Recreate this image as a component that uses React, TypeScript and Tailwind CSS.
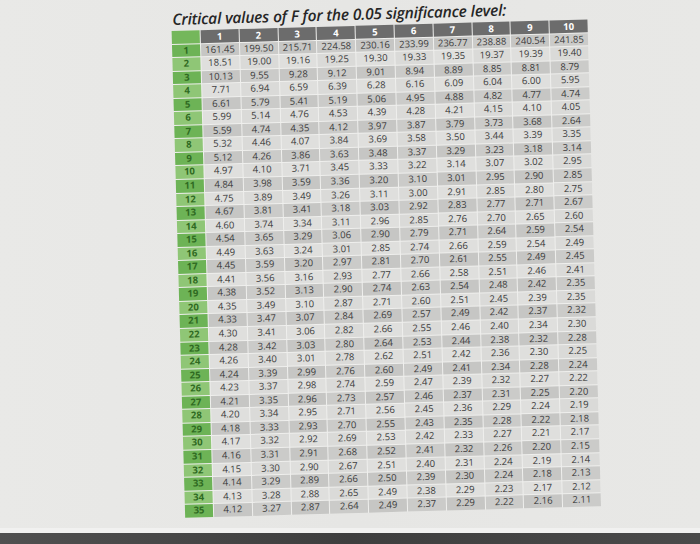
import React from "react"

const rows: string[][] = [
  ["161.45", "199.50", "215.71", "224.58", "230.16", "233.99", "236.77", "238.88", "240.54", "241.85"],
  ["18.51", "19.00", "19.16", "19.25", "19.30", "19.33", "19.35", "19.37", "19.39", "19.40"],
  ["10.13", "9.55", "9.28", "9.12", "9.01", "8.94", "8.89", "8.85", "8.81", "8.79"],
  ["7.71", "6.94", "6.59", "6.39", "6.28", "6.16", "6.09", "6.04", "6.00", "5.95"],
  ["6.61", "5.79", "5.41", "5.19", "5.06", "4.95", "4.88", "4.82", "4.77", "4.74"],
  ["5.99", "5.14", "4.76", "4.53", "4.39", "4.28", "4.21", "4.15", "4.10", "4.05"],
  ["5.59", "4.74", "4.35", "4.12", "3.97", "3.87", "3.79", "3.73", "3.68", "2.64"],
  ["5.32", "4.46", "4.07", "3.84", "3.69", "3.58", "3.50", "3.44", "3.39", "3.35"],
  ["5.12", "4.26", "3.86", "3.63", "3.48", "3.37", "3.29", "3.23", "3.18", "3.14"],
  ["4.97", "4.10", "3.71", "3.45", "3.33", "3.22", "3.14", "3.07", "3.02", "2.95"],
  ["4.84", "3.98", "3.59", "3.36", "3.20", "3.10", "3.01", "2.95", "2.90", "2.85"],
  ["4.75", "3.89", "3.49", "3.26", "3.11", "3.00", "2.91", "2.85", "2.80", "2.75"],
  ["4.67", "3.81", "3.41", "3.18", "3.03", "2.92", "2.83", "2.77", "2.71", "2.67"],
  ["4.60", "3.74", "3.34", "3.11", "2.96", "2.85", "2.76", "2.70", "2.65", "2.60"],
  ["4.54", "3.65", "3.29", "3.06", "2.90", "2.79", "2.71", "2.64", "2.59", "2.54"],
  ["4.49", "3.63", "3.24", "3.01", "2.85", "2.74", "2.66", "2.59", "2.54", "2.49"],
  ["4.45", "3.59", "3.20", "2.97", "2.81", "2.70", "2.61", "2.55", "2.49", "2.45"],
  ["4.41", "3.56", "3.16", "2.93", "2.77", "2.66", "2.58", "2.51", "2.46", "2.41"],
  ["4.38", "3.52", "3.13", "2.90", "2.74", "2.63", "2.54", "2.48", "2.42", "2.35"],
  ["4.35", "3.49", "3.10", "2.87", "2.71", "2.60", "2.51", "2.45", "2.39", "2.35"],
  ["4.33", "3.47", "3.07", "2.84", "2.69", "2.57", "2.49", "2.42", "2.37", "2.32"],
  ["4.30", "3.41", "3.06", "2.82", "2.66", "2.55", "2.46", "2.40", "2.34", "2.30"],
  ["4.28", "3.42", "3.03", "2.80", "2.64", "2.53", "2.44", "2.38", "2.32", "2.28"],
  ["4.26", "3.40", "3.01", "2.78", "2.62", "2.51", "2.42", "2.36", "2.30", "2.25"],
  ["4.24", "3.39", "2.99", "2.76", "2.60", "2.49", "2.41", "2.34", "2.28", "2.24"],
  ["4.23", "3.37", "2.98", "2.74", "2.59", "2.47", "2.39", "2.32", "2.27", "2.22"],
  ["4.21", "3.35", "2.96", "2.73", "2.57", "2.46", "2.37", "2.31", "2.25", "2.20"],
  ["4.20", "3.34", "2.95", "2.71", "2.56", "2.45", "2.36", "2.29", "2.24", "2.19"],
  ["4.18", "3.33", "2.93", "2.70", "2.55", "2.43", "2.35", "2.28", "2.22", "2.18"],
  ["4.17", "3.32", "2.92", "2.69", "2.53", "2.42", "2.33", "2.27", "2.21", "2.17"],
  ["4.16", "3.31", "2.91", "2.68", "2.52", "2.41", "2.32", "2.26", "2.20", "2.15"],
  ["4.15", "3.30", "2.90", "2.67", "2.51", "2.40", "2.31", "2.24", "2.19", "2.14"],
  ["4.14", "3.29", "2.89", "2.66", "2.50", "2.39", "2.30", "2.24", "2.18", "2.13"],
  ["4.13", "3.28", "2.88", "2.65", "2.49", "2.38", "2.29", "2.23", "2.17", "2.12"],
  ["4.12", "3.27", "2.87", "2.64", "2.49", "2.37", "2.29", "2.22", "2.16", "2.11"],
]

const cols = ["1", "2", "3", "4", "5", "6", "7", "8", "9", "10"]

const title = "Critical values of F for the 0.05 significance level:".split(" ")

export default function App() {
  return (
    <div className="w-[700px] h-[544px] overflow-hidden flex flex-col bg-gradient-to-r from-[#e9e9e7] via-[#e6e6e4] to-[#e8e8e6] font-['Open_Sans',sans-serif]">
      <div className="flex-1 pl-[171px] pt-[10px]">
        <div className="w-[416px] origin-top-left rotate-[-1.6deg]">
          <h1 className="flex gap-[4px] text-[15.5px] leading-[18px] font-semibold italic tracking-[-0.2px] text-[#262626] whitespace-nowrap pl-[1px] mb-[3px]">
            {title.map((w, i) => (
              <span key={i}>{w}</span>
            ))}
          </h1>

          {/* table */}
          <div className="grid grid-cols-[28px_repeat(10,1fr)] gap-px bg-[#efefed] text-[9.5px] leading-[12.55px] text-center">
            <div className="bg-[#74b75b]" />
            {cols.map((c) => (
              <div key={c} className="bg-[#6c6c6c] flex justify-center pt-[1px]">
                <span className="text-white font-bold leading-[11.55px]">{c}</span>
              </div>
            ))}

            {rows.map((row, i) => {
              const odd = i % 2 === 0
              return (
                <React.Fragment key={i}>
                  <div className={odd ? "bg-[#6db356] flex justify-center" : "bg-[#8fc676] flex justify-center"}>
                    <span className="text-[#2f6a22] font-bold">{i + 1}</span>
                  </div>
                  {row.map((v, j) => (
                    <div
                      key={j}
                      className={
                        odd
                          ? j % 2 === 0
                            ? "bg-[#c6c6c4] flex justify-center"
                            : "bg-[#cbcbc9] flex justify-center"
                          : j % 2 === 0
                            ? "bg-[#dfdfdd] flex justify-center"
                            : "bg-[#dadad8] flex justify-center"
                      }
                    >
                      <span className="text-[#3c3c3c]">{v}</span>
                    </div>
                  ))}
                </React.Fragment>
              )
            })}
          </div>
        </div>
      </div>
      <div className="h-[5px] bg-[#f1f1f0]" />
      <div className="h-[11px] bg-gradient-to-r from-[#505050] via-[#3e3e3e] to-[#4a4a4a]" />
    </div>
  )
}
